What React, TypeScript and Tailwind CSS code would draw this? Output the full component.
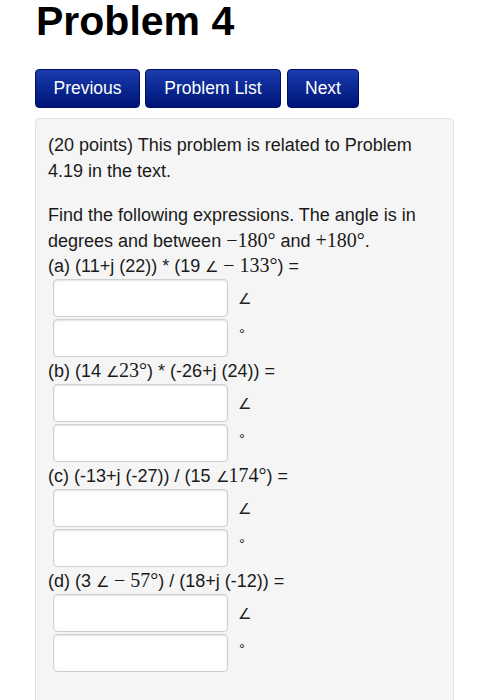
import React from 'react';

const sans = { fontFamily: '"Liberation Sans", Arial, sans-serif' };

function Angle() {
  return <span className="font-['DejaVu_Sans',sans-serif] text-[15px] leading-none font-light">∠</span>;
}

function M({ children }: { children: React.ReactNode }) {
  return <span className="font-['Liberation_Serif',serif] text-[20px] leading-none">{children}</span>;
}

function AnswerRows() {
  return (
    <div className="ml-[5px]">
      <div className="flex items-center mb-[2px]">
        <div className="w-[175px] h-[38px] bg-white border border-[#cfcfcf] rounded-[4px] shadow-[inset_0_1px_2px_rgba(0,0,0,0.12)]" />
        <span className="ml-[10px] text-[#222]">
          <Angle />
        </span>
      </div>
      <div className="flex items-center mb-[2px]">
        <div className="w-[175px] h-[38px] bg-white border border-[#cfcfcf] rounded-[4px] shadow-[inset_0_1px_2px_rgba(0,0,0,0.12)]" />
        <span className="ml-[11px] text-[15px] leading-none -translate-y-[5px] text-[#222]">°</span>
      </div>
    </div>
  );
}

export default function App() {
  return (
    <div className="w-[490px] h-[700px] overflow-hidden bg-white text-[#111]" style={sans}>
      {/* Title */}
      <h1 className="ml-[36px] -mt-[3px] text-[41px] leading-[48px] font-bold text-black">Problem 4</h1>

      {/* Nav buttons */}
      <div className="flex ml-[35px] mt-[24px]">
        <button className="w-[105px] h-[39px] rounded-[4px] border border-[#000f66] bg-gradient-to-b from-[#1c3cae] to-[#001276] text-white text-[17.5px]">
          Previous
        </button>
        <button className="ml-[5px] w-[136px] h-[39px] rounded-[4px] border border-[#000f66] bg-gradient-to-b from-[#1c3cae] to-[#001276] text-white text-[17.5px]">
          Problem List
        </button>
        <button className="ml-[6px] w-[72px] h-[39px] rounded-[4px] border border-[#000f66] bg-gradient-to-b from-[#1c3cae] to-[#001276] text-white text-[17.5px]">
          Next
        </button>
      </div>

      {/* Problem well */}
      <div className="ml-[35px] mt-[10px] w-[419px] bg-[#f5f5f5] border border-[#e3e3e3] rounded-[4px] pl-[12px] pr-[12px] pt-[13px] pb-[60px] text-[18px] text-[#1a1a1a]">
        <p className="leading-[26px]">(20 points) This problem is related to Problem 4.19 in the text.</p>

        <p className="mt-[18px] leading-[26px]">
          Find the following expressions. The angle is in degrees and between <M>−180°</M> and <M>+180°</M>.
        </p>

        <div className="leading-[24px] mb-[1px]">
          (a) (11+j (22)) * (19 <Angle />
          <M>
            <span className="mx-[5px]">−</span>133°
          </M>
          ) =
        </div>
        <AnswerRows />

        <div className="leading-[24px] mb-[1px]">
          (b) (14 <Angle />
          <M>23°</M>) * (-26+j (24)) =
        </div>
        <AnswerRows />

        <div className="leading-[24px] mb-[1px]">
          (c) (-13+j (-27)) / (15 <Angle />
          <M>174°</M>) =
        </div>
        <AnswerRows />

        <div className="leading-[24px] mb-[1px]">
          (d) (3 <Angle />
          <M>
            <span className="mx-[5px]">−</span>57°
          </M>
          ) / (18+j (-12)) =
        </div>
        <AnswerRows />
      </div>
    </div>
  );
}
